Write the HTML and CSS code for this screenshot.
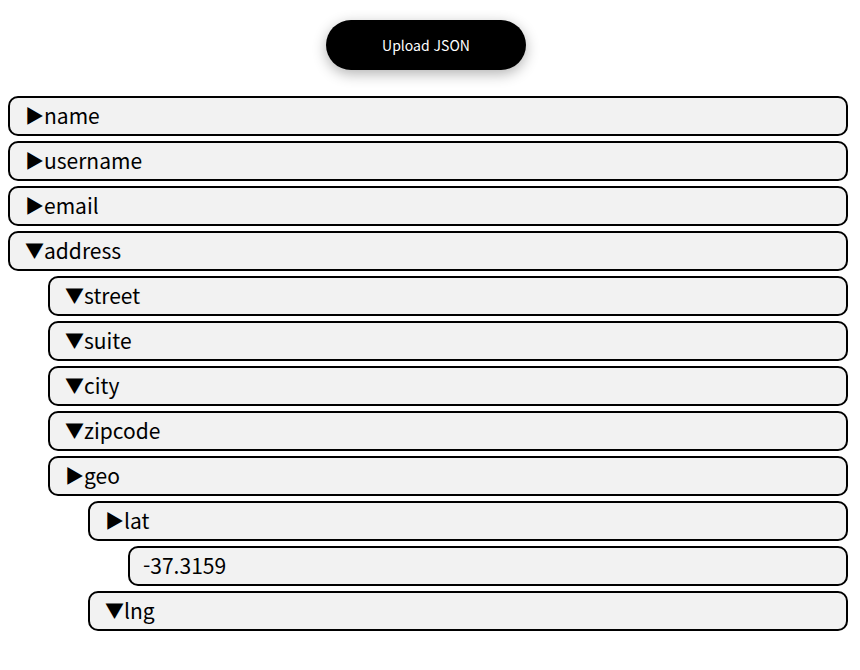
FILE: index.html
```html
<!DOCTYPE html>
<html lang="ko">
<head>
    <meta charset="UTF-8">
    <meta name="viewport" content="width=device-width, initial-scale=1.0">
    <title>JSON Viewer</title>
    <link rel="stylesheet" href="styles.css">
</head>
<body>
    <div class="toolbar">
        <button class="upload-btn">Upload JSON</button>
    </div>

    <div class="tree">
        <div class="node"><span class="arrow">&#9654;</span>name</div>
        <div class="node"><span class="arrow">&#9654;</span>username</div>
        <div class="node"><span class="arrow">&#9654;</span>email</div>
        <div class="node"><span class="arrow">&#9660;</span>address</div>
        <div class="children">
            <div class="node"><span class="arrow">&#9660;</span>street</div>
            <div class="node"><span class="arrow">&#9660;</span>suite</div>
            <div class="node"><span class="arrow">&#9660;</span>city</div>
            <div class="node"><span class="arrow">&#9660;</span>zipcode</div>
            <div class="node"><span class="arrow">&#9654;</span>geo</div>
            <div class="children">
                <div class="node"><span class="arrow">&#9654;</span>lat</div>
                <div class="children">
                    <div class="node value">-37.3159</div>
                </div>
                <div class="node"><span class="arrow">&#9660;</span>lng</div>
            </div>
        </div>
    </div>
</body>
</html>
```

FILE: styles.css
```css
body {
    margin: 8px;
    background-color: white;
    font-family: "Noto Sans CJK KR", "Noto Sans", sans-serif;
}

.toolbar {
    display: flex;
    justify-content: center;
    padding-top: 12px;
    padding-right: 8px;
    margin-bottom: 26px;
}

.upload-btn {
    width: 200px;
    height: 50px;
    background-color: black;
    color: white;
    border: none;
    border-radius: 25px;
    font-family: inherit;
    font-size: 14px;
    cursor: pointer;
    box-shadow: 0 4px 14px rgba(0, 0, 0, 0.3);
}

.tree {
    margin-right: 4px;
}

.children {
    margin-left: 40px;
}

/* one row of the tree */
.node {
    height: 40px;
    box-sizing: border-box;
    display: flex;
    align-items: center;
    padding-left: 15px;
    padding-bottom: 3px;
    margin-bottom: 5px;
    background-color: #f2f2f2;
    border: 2px solid black;
    border-radius: 10px;
    font-size: 21px;
    color: black;
}

.arrow {
    font-size: 19px;
}

.value {
    padding-left: 13px;
}
```
